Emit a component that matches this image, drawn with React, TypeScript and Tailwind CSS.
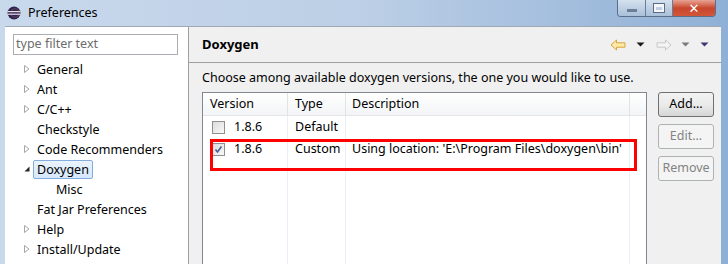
import React from "react";

const font = { fontFamily: '"Noto Sans", "Open Sans", sans-serif' };

function Collapsed() {
  return (
    <svg width="8" height="10" viewBox="0 0 8 10" className="shrink-0">
      <path d="M1.5 1.5 L6 5 L1.5 8.5 Z" fill="none" stroke="#a6a6a6" strokeWidth="1" />
    </svg>
  );
}

function Expanded() {
  return (
    <svg width="8" height="10" viewBox="0 0 8 10" className="shrink-0">
      <path d="M6.5 2.5 L6.5 7.5 L1.5 7.5 Z" fill="#262626" />
    </svg>
  );
}

function TreeItem({
  label,
  arrow,
  indent = 0,
  selected = false,
}: {
  label: string;
  arrow?: "c" | "e";
  indent?: number;
  selected?: boolean;
}) {
  return (
    <div className="flex h-[20px] items-center" style={{ paddingLeft: 18 + indent }}>
      <div className="flex w-[10px] items-center">
        {arrow === "c" && <Collapsed />}
        {arrow === "e" && <Expanded />}
      </div>
      <span
        className={
          selected
            ? "rounded-[2px] border border-[#84acdd] bg-gradient-to-b from-[#eaf3fd] to-[#d6e8fc] px-[3px] leading-[17px]"
            : "border border-transparent px-[3px] leading-[17px]"
        }
      >
        {label}
      </span>
    </div>
  );
}

function Checkbox({ checked }: { checked?: boolean }) {
  return (
    <div className="flex h-[13px] w-[13px] items-center justify-center border border-[#8f8f8f] bg-gradient-to-br from-[#dcdcdc] to-[#f8f8f8]">
      {checked && (
        <svg width="9" height="9" viewBox="0 0 9 9">
          <path d="M1.5 4.5 L3.5 7 L7.5 1.5" fill="none" stroke="#4a5f97" strokeWidth="1.6" />
        </svg>
      )}
    </div>
  );
}

function Dropdown({ color }: { color: string }) {
  return (
    <svg width="9" height="5" viewBox="0 0 9 5">
      <path d="M0.5 0.5 L8.5 0.5 L4.5 4.5 Z" fill={color} />
    </svg>
  );
}

export default function App() {
  return (
    <div
      className="flex h-[264px] w-[728px] flex-col overflow-hidden bg-gradient-to-r from-[#c9d9ec] via-[#bccfe6] to-[#8fb0d6] text-[12.5px] text-black"
      style={font}
    >
      {/* title bar */}
      <div className="relative flex h-[26px] shrink-0 items-center pl-[7px]">
        <svg width="14" height="14" viewBox="0 0 14 14">
          <circle cx="7" cy="7" r="6.5" fill="#2c2255" />
          <rect x="0.5" y="5" width="13" height="1.2" fill="#e8e4f0" />
          <rect x="0.5" y="7.6" width="13" height="1.2" fill="#e8e4f0" />
          <circle cx="8" cy="7" r="4.2" fill="none" stroke="#f4a33a" strokeWidth="0.6" opacity="0.5" />
        </svg>
        <span className="ml-[7px] text-[12.5px] text-black">Preferences</span>
        <div className="absolute right-[12px] top-0 flex h-[17px] overflow-hidden rounded-b-[4px] border border-t-0 border-[#5d6f88]">
          <div className="flex w-[28px] items-center justify-center border-r border-[#6a7d98] bg-gradient-to-b from-[#d5e1ee] to-[#a9bfd9]">
            <div className="mt-[4px] h-[3px] w-[10px] bg-[#6b7f99]" />
          </div>
          <div className="flex w-[27px] items-center justify-center border-r border-[#6a7d98] bg-gradient-to-b from-[#d5e1ee] to-[#a9bfd9]">
            <div className="h-[8px] w-[10px] border-2 border-t-[3px] border-[#f4f6f9] shadow-[0_0_0_1px_#5b6d86]" />
          </div>
          <div className="flex w-[42px] items-center justify-center bg-gradient-to-b from-[#e6a393] via-[#c9462c] to-[#d2563a]">
            <span className="text-[13px] font-bold leading-none text-white" style={{ fontFamily: '"DejaVu Sans", sans-serif' }}>
              ✕
            </span>
          </div>
        </div>
      </div>

      {/* client area */}
      <div className="mx-[5px] mr-[7px] flex flex-1 border-t border-[#a0a8b4] bg-[#f0f0f0]">
        {/* left panel */}
        <div className="w-[184px] shrink-0 border-r border-[#a0a0a0] bg-white pt-[7px]">
          <div className="ml-[8px] flex h-[21px] w-[165px] items-center border border-[#abadb3] pl-[2px] text-[#6d6d6d]">
            type filter text
          </div>
          <div className="pt-[4px]">
            <TreeItem label="General" arrow="c" />
            <TreeItem label="Ant" arrow="c" />
            <TreeItem label="C/C++" arrow="c" />
            <TreeItem label="Checkstyle" />
            <TreeItem label="Code Recommenders" arrow="c" />
            <TreeItem label="Doxygen" arrow="e" selected />
            <TreeItem label="Misc" indent={19} />
            <TreeItem label="Fat Jar Preferences" />
            <TreeItem label="Help" arrow="c" />
            <TreeItem label="Install/Update" arrow="c" />
          </div>
        </div>

        {/* right panel */}
        <div className="flex flex-1 flex-col">
          <div className="flex h-[36px] shrink-0 items-center border-b border-[#a0a0a0] pl-[13px] pr-[12px]">
            <span className="text-[13px] font-bold">Doxygen</span>
            <div className="ml-auto flex items-center">
              <svg width="16" height="12" viewBox="0 0 16 12">
                <path d="M1 6 L6.5 1 L6.5 3.8 L15 3.8 L15 8.2 L6.5 8.2 L6.5 11 Z" fill="#fde9a8" stroke="#d8a43a" strokeWidth="1" strokeLinejoin="round" />
              </svg>
              <div className="ml-[10px]">
                <Dropdown color="#1a1a1a" />
              </div>
              <svg width="16" height="12" viewBox="0 0 16 12" className="ml-[11px]">
                <path d="M15 6 L9.5 1 L9.5 3.8 L1 3.8 L1 8.2 L9.5 8.2 L9.5 11 Z" fill="#f4f4f4" stroke="#c8c8c8" strokeWidth="1" strokeLinejoin="round" />
              </svg>
              <div className="ml-[9px]">
                <Dropdown color="#7a7a7a" />
              </div>
              <div className="ml-[10px]">
                <Dropdown color="#3c3772" />
              </div>
            </div>
          </div>

          <div className="flex flex-1 flex-col pl-[13px] pr-[7px]">
            <div className="mt-[6px] h-[17px] leading-[17px]">
              Choose among available doxygen versions, the one you would like to use.
            </div>
            <div className="mt-[6px] flex flex-1 gap-[11px]">
              {/* table */}
              <div className="relative flex-1 border border-b-0 border-[#828790] bg-white">
                <div className="flex h-[23px] border-b border-[#e5e5e5] bg-gradient-to-b from-white to-[#f3f4f6]">
                  <div className="flex w-[85px] items-center border-r border-[#e3e3e3] pl-[7px]">Version</div>
                  <div className="flex w-[58px] items-center border-r border-[#e3e3e3] pl-[7px]">Type</div>
                  <div className="flex w-[284px] items-center border-r border-[#e3e3e3] pl-[6px]">Description</div>
                </div>
                <div className="absolute bottom-0 left-[84px] top-[23px] w-px bg-[#e8eff9]" />
                <div className="absolute bottom-0 left-[142px] top-[23px] w-px bg-[#e8eff9]" />
                <div className="absolute bottom-0 left-[426px] top-[23px] w-px bg-[#e8eff9]" />
                {[
                  { checked: false, type: "Default", desc: "" },
                  { checked: true, type: "Custom", desc: "Using location: 'E:\\Program Files\\doxygen\\bin'" },
                ].map((r, i) => (
                  <div key={i} className="flex h-[22px] items-center">
                    <div className="flex w-[85px] items-center pl-[9px]">
                      <Checkbox checked={r.checked} />
                      <span className="ml-[9px]">1.8.6</span>
                    </div>
                    <div className="w-[58px] pl-[7px]">{r.type}</div>
                    <div className="pl-[6px] whitespace-nowrap">{r.desc}</div>
                  </div>
                ))}
                <div className="absolute left-[7px] top-[46px] h-[32px] w-[427px] border-[3px] border-[#ff0000]" />
              </div>

              {/* buttons */}
              <div className="flex w-[56px] flex-col gap-[7px]">
                <div className="flex h-[25px] items-center justify-center rounded-[3px] border border-[#707070] bg-gradient-to-b from-[#f2f2f2] via-[#ebebeb] to-[#d6d6d6]">
                  Add...
                </div>
                <div className="flex h-[25px] items-center justify-center rounded-[3px] border border-[#adb2b5] bg-[#f4f4f4] text-[#838383]">
                  Edit...
                </div>
                <div className="flex h-[25px] items-center justify-center rounded-[3px] border border-[#adb2b5] bg-[#f4f4f4] text-[#838383]">
                  Remove
                </div>
              </div>
            </div>
          </div>
        </div>
      </div>
    </div>
  );
}
